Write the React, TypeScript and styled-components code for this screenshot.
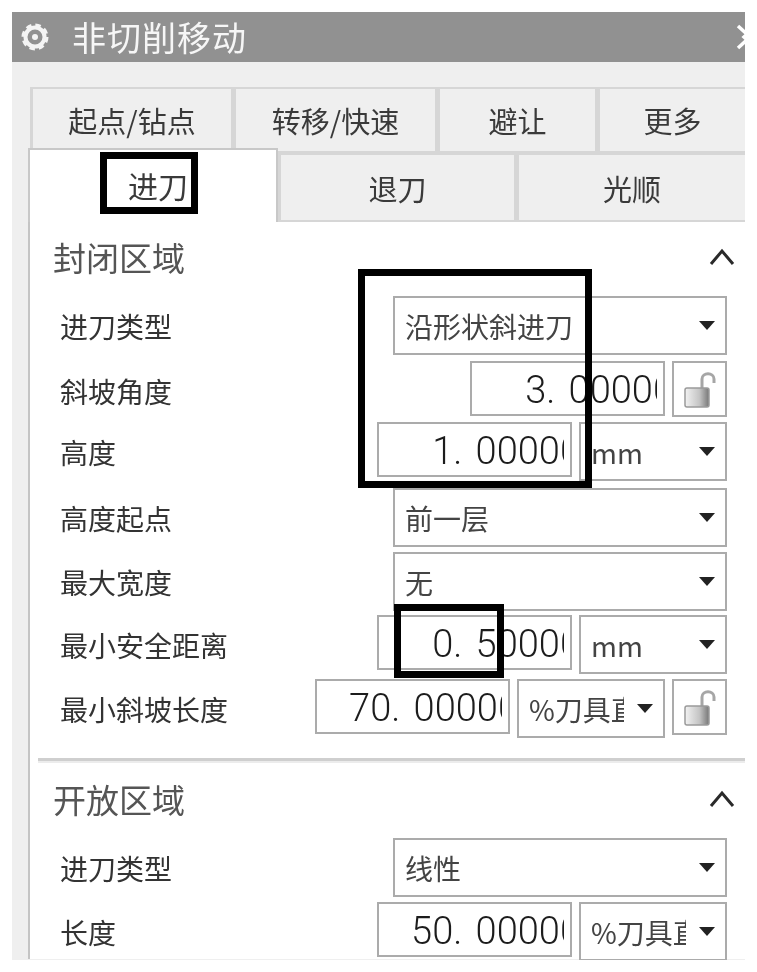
import React from 'react'
import styled, { createGlobalStyle } from 'styled-components'

const GlobalStyle = createGlobalStyle`
    html, body {
        margin: 0;
        padding: 0;
        background: #fff;
    }
`

const FONT = `"Noto Sans CJK SC", "Noto Sans", sans-serif`

const CloseIcon = () => (
    <CloseSvg width="22" height="28" viewBox="0 0 22 28">
        <path d="M3 3 L15 14 L3 25" fill="none" stroke="#fff" strokeWidth="3.5" />
        <path d="M21 3 L9 14 L21 25" fill="none" stroke="#fff" strokeWidth="3.5" />
    </CloseSvg>
)

const GearIcon = () => (
    <svg width="28" height="28" viewBox="0 0 28 28">
        <circle cx="14" cy="14" r="9.5" fill="none" stroke="#f4f4f4" strokeWidth="4" />
        <circle cx="14" cy="14" r="11" fill="none" stroke="#f4f4f4" strokeWidth="5" strokeDasharray="5 3.64" />
        <circle cx="14" cy="14" r="3" fill="#f4f4f4" />
    </svg>
)

const LockIcon = () => (
    <svg width="40" height="40" viewBox="0 0 40 40">
        <defs>
            <linearGradient id="lockBody" x1="0" x2="1" y1="0" y2="0">
                <stop offset="0" stopColor="#f2f2f2" />
                <stop offset="0.6" stopColor="#c4c4c4" />
                <stop offset="1" stopColor="#777" />
            </linearGradient>
        </defs>
        <path d="M22 20 V10 C22 3 34 3 34 10 V14" fill="none" stroke="#a6a6a6" strokeWidth="3" />
        <rect x="5" y="19" width="24" height="19" rx="2" fill="url(#lockBody)" stroke="#9a9a9a" strokeWidth="1.5" />
    </svg>
)

const Chevron = () => (
    <svg width="28" height="18" viewBox="0 0 28 18">
        <path d="M3 16 L14 3 L25 16" fill="none" stroke="#2a2a2a" strokeWidth="3" />
    </svg>
)

const Select = ({ text, width }: { text: string; width: number }) => (
    <SelectBox $width={width}>
        <SelectText>{text}</SelectText>
        <Arrow />
    </SelectBox>
)

const Field = ({ value }: { value: string }) => (
    <FieldBox>
        <FieldClip>
            <FieldValue>{value}</FieldValue>
        </FieldClip>
    </FieldBox>
)

const Lock = () => (
    <LockButton>
        <LockIcon />
    </LockButton>
)

export default function App() {
    return (
        <Page>
            <GlobalStyle />
            <Window>
                <TitleBar>
                    <GearIcon />
                    <TitleText>非切削移动</TitleText>
                    <CloseIcon />
                </TitleBar>
                <TabArea>
                    <TabRow $columns="203px 204px 160px 1fr">
                        <Tab>起点/钻点</Tab>
                        <Tab>转移/快速</Tab>
                        <Tab>避让</Tab>
                        <Tab>更多</Tab>
                    </TabRow>
                    <LowerTabRow $columns="250px 238px 1fr">
                        <ActiveTab>进刀</ActiveTab>
                        <Tab>退刀</Tab>
                        <Tab>光顺</Tab>
                    </LowerTabRow>
                </TabArea>
                <Content>
                    <SectionHeader>
                        <SectionTitle>封闭区域</SectionTitle>
                        <Chevron />
                    </SectionHeader>
                    <Row $height={65}>
                        <Label>进刀类型</Label>
                        <Select text="沿形状斜进刀" width={334} />
                    </Row>
                    <Row $height={61}>
                        <Label>斜坡角度</Label>
                        <Controls>
                            <Field value="3. 00000" />
                            <Lock />
                        </Controls>
                    </Row>
                    <Row $height={66}>
                        <Label>高度</Label>
                        <Controls>
                            <Field value="1. 00000" />
                            <Select text="mm" width={148} />
                        </Controls>
                    </Row>
                    <Row $height={64}>
                        <Label>高度起点</Label>
                        <Select text="前一层" width={334} />
                    </Row>
                    <Row $height={63}>
                        <Label>最大宽度</Label>
                        <Select text="无" width={334} />
                    </Row>
                    <Row $height={64}>
                        <Label>最小安全距离</Label>
                        <Controls>
                            <Field value="0. 50000" />
                            <Select text="mm" width={148} />
                        </Controls>
                    </Row>
                    <Row $height={79}>
                        <Label>最小斜坡长度</Label>
                        <Controls>
                            <Field value="70. 00000" />
                            <Select text="%刀具直径" width={148} />
                            <Lock />
                        </Controls>
                    </Row>
                    <Divider />
                    <SectionHeader>
                        <SectionTitle>开放区域</SectionTitle>
                        <Chevron />
                    </SectionHeader>
                    <Row $height={64}>
                        <Label>进刀类型</Label>
                        <Select text="线性" width={334} />
                    </Row>
                    <Row $height={64}>
                        <Label>长度</Label>
                        <Controls>
                            <Field value="50. 00000" />
                            <Select text="%刀具直径" width={148} />
                        </Controls>
                    </Row>
                </Content>
            </Window>
            <Marker $x={100} $y={152} $w={98} $h={62} />
            <Marker $x={358} $y={269} $w={234} $h={219} />
            <Marker $x={394} $y={604} $w={110} $h={74} />
        </Page>
    )
}

const Page = styled.div`
    position: relative;
    width: 757px;
    height: 972px;
    padding: 12px 12px 0;
    box-sizing: border-box;
    overflow: hidden;
    background: #fff;
`

const Window = styled.div`
    width: 733px;
    height: 948px;
    overflow: hidden;
    background: #efefef;
    font-family: ${FONT};
    color: #3a3a3a;
    filter: blur(0.5px);
`

const TitleBar = styled.div`
    display: flex;
    align-items: center;
    height: 50px;
    padding-left: 9px;
    background: #919191;
    overflow: hidden;
`

const TitleText = styled.div`
    flex: 1;
    margin-left: 23px;
    font-size: 34px;
    line-height: 50px;
    color: #f6f6f6;
    letter-spacing: 1px;
`

const CloseSvg = styled.svg`
    flex: none;
    margin-right: -12px;
`

const TabArea = styled.div`
    padding: 25px 0 0 16px;
`

const TabRow = styled.div<{ $columns: string }>`
    display: grid;
    grid-template-columns: ${({ $columns }) => $columns};
    height: 66px;
    margin-left: 2px;
    margin-right: -2px;
`

const LowerTabRow = styled(TabRow)`
    margin-left: 0;
    height: 68px;
    border-bottom: 0;
`

const Tab = styled.div`
    display: flex;
    align-items: center;
    justify-content: center;
    box-sizing: border-box;
    border: 2px solid #d6d6d6;
    border-left-width: 3px;
    font-size: 29px;
    color: #3a3a3a;
`

const ActiveTab = styled.div`
    position: relative;
    z-index: 1;
    display: flex;
    align-items: center;
    justify-content: center;
    box-sizing: border-box;
    height: 74px;
    margin-top: -5px;
    padding: 0 0 2px 10px;
    background: #fff;
    border: 2px solid #c8c8c8;
    border-bottom: 0;
    font-size: 30px;
    color: #3a3a3a;
`

const Content = styled.div`
    box-sizing: border-box;
    height: 738px;
    margin-left: 16px;
    padding-right: 18px;
    background: #fff;
    border-left: 2px solid #c4c4c4;
`

const SectionHeader = styled.div`
    display: flex;
    align-items: center;
    justify-content: space-between;
    height: 75px;
    padding: 0 0 3px 23px;
    margin-right: -9px;
    box-sizing: border-box;
`

const SectionTitle = styled.div`
    font-size: 33px;
    line-height: 1;
    color: #555;
`

const Row = styled.div<{ $height: number }>`
    display: flex;
    align-items: flex-start;
    justify-content: space-between;
    height: ${({ $height }) => $height}px;
    padding-left: 30px;
`

const Label = styled.div`
    font-size: 28px;
    line-height: 60px;
    color: #333;
    white-space: nowrap;
`

const Controls = styled.div`
    display: flex;
    align-items: flex-start;
    gap: 7px;
`

const SelectBox = styled.div<{ $width: number }>`
    display: flex;
    align-items: center;
    box-sizing: border-box;
    width: ${({ $width }) => $width}px;
    height: 59px;
    padding: 0 10px 0 10px;
    border: 2.5px solid #ababab;
    background: #fff;
`

const SelectText = styled.div`
    flex: 1;
    overflow: hidden;
    margin-right: 13px;
    font-size: 28px;
    line-height: 54px;
    height: 54px;
    white-space: nowrap;
    color: #444;
`

const Arrow = styled.div`
    flex: none;
    width: 0;
    height: 0;
    border-left: 8px solid transparent;
    border-right: 8px solid transparent;
    border-top: 9px solid #222;
`

const FieldBox = styled.div`
    display: flex;
    box-sizing: border-box;
    width: 195px;
    height: 55px;
    padding: 0 6px;
    border: 2.5px solid #ababab;
    background: #fff;
`

const FieldClip = styled.div`
    flex: 1;
    display: flex;
    justify-content: flex-end;
    overflow: hidden;
`

const FieldValue = styled.div`
    flex: none;
    margin-right: -17px;
    font-family: Roboto, "Liberation Sans", sans-serif;
    font-weight: 300;
    font-size: 38px;
    word-spacing: 4px;
    line-height: 54px;
    white-space: pre;
    color: #1c1c1c;
`

const LockButton = styled.div`
    display: flex;
    align-items: center;
    justify-content: center;
    box-sizing: border-box;
    width: 55px;
    height: 56px;
    border: 2.5px solid #ababab;
    background: #fff;
`

const Divider = styled.div`
    height: 3px;
    margin-left: 8px;
    margin-right: -18px;
    background: #cfcfcf;
    border-bottom: 2px solid #ececec;
`

const Marker = styled.div<{ $x: number; $y: number; $w: number; $h: number }>`
    position: absolute;
    left: ${({ $x }) => $x}px;
    top: ${({ $y }) => $y}px;
    width: ${({ $w }) => $w}px;
    height: ${({ $h }) => $h}px;
    box-sizing: border-box;
    border: 7px solid #000;
`
